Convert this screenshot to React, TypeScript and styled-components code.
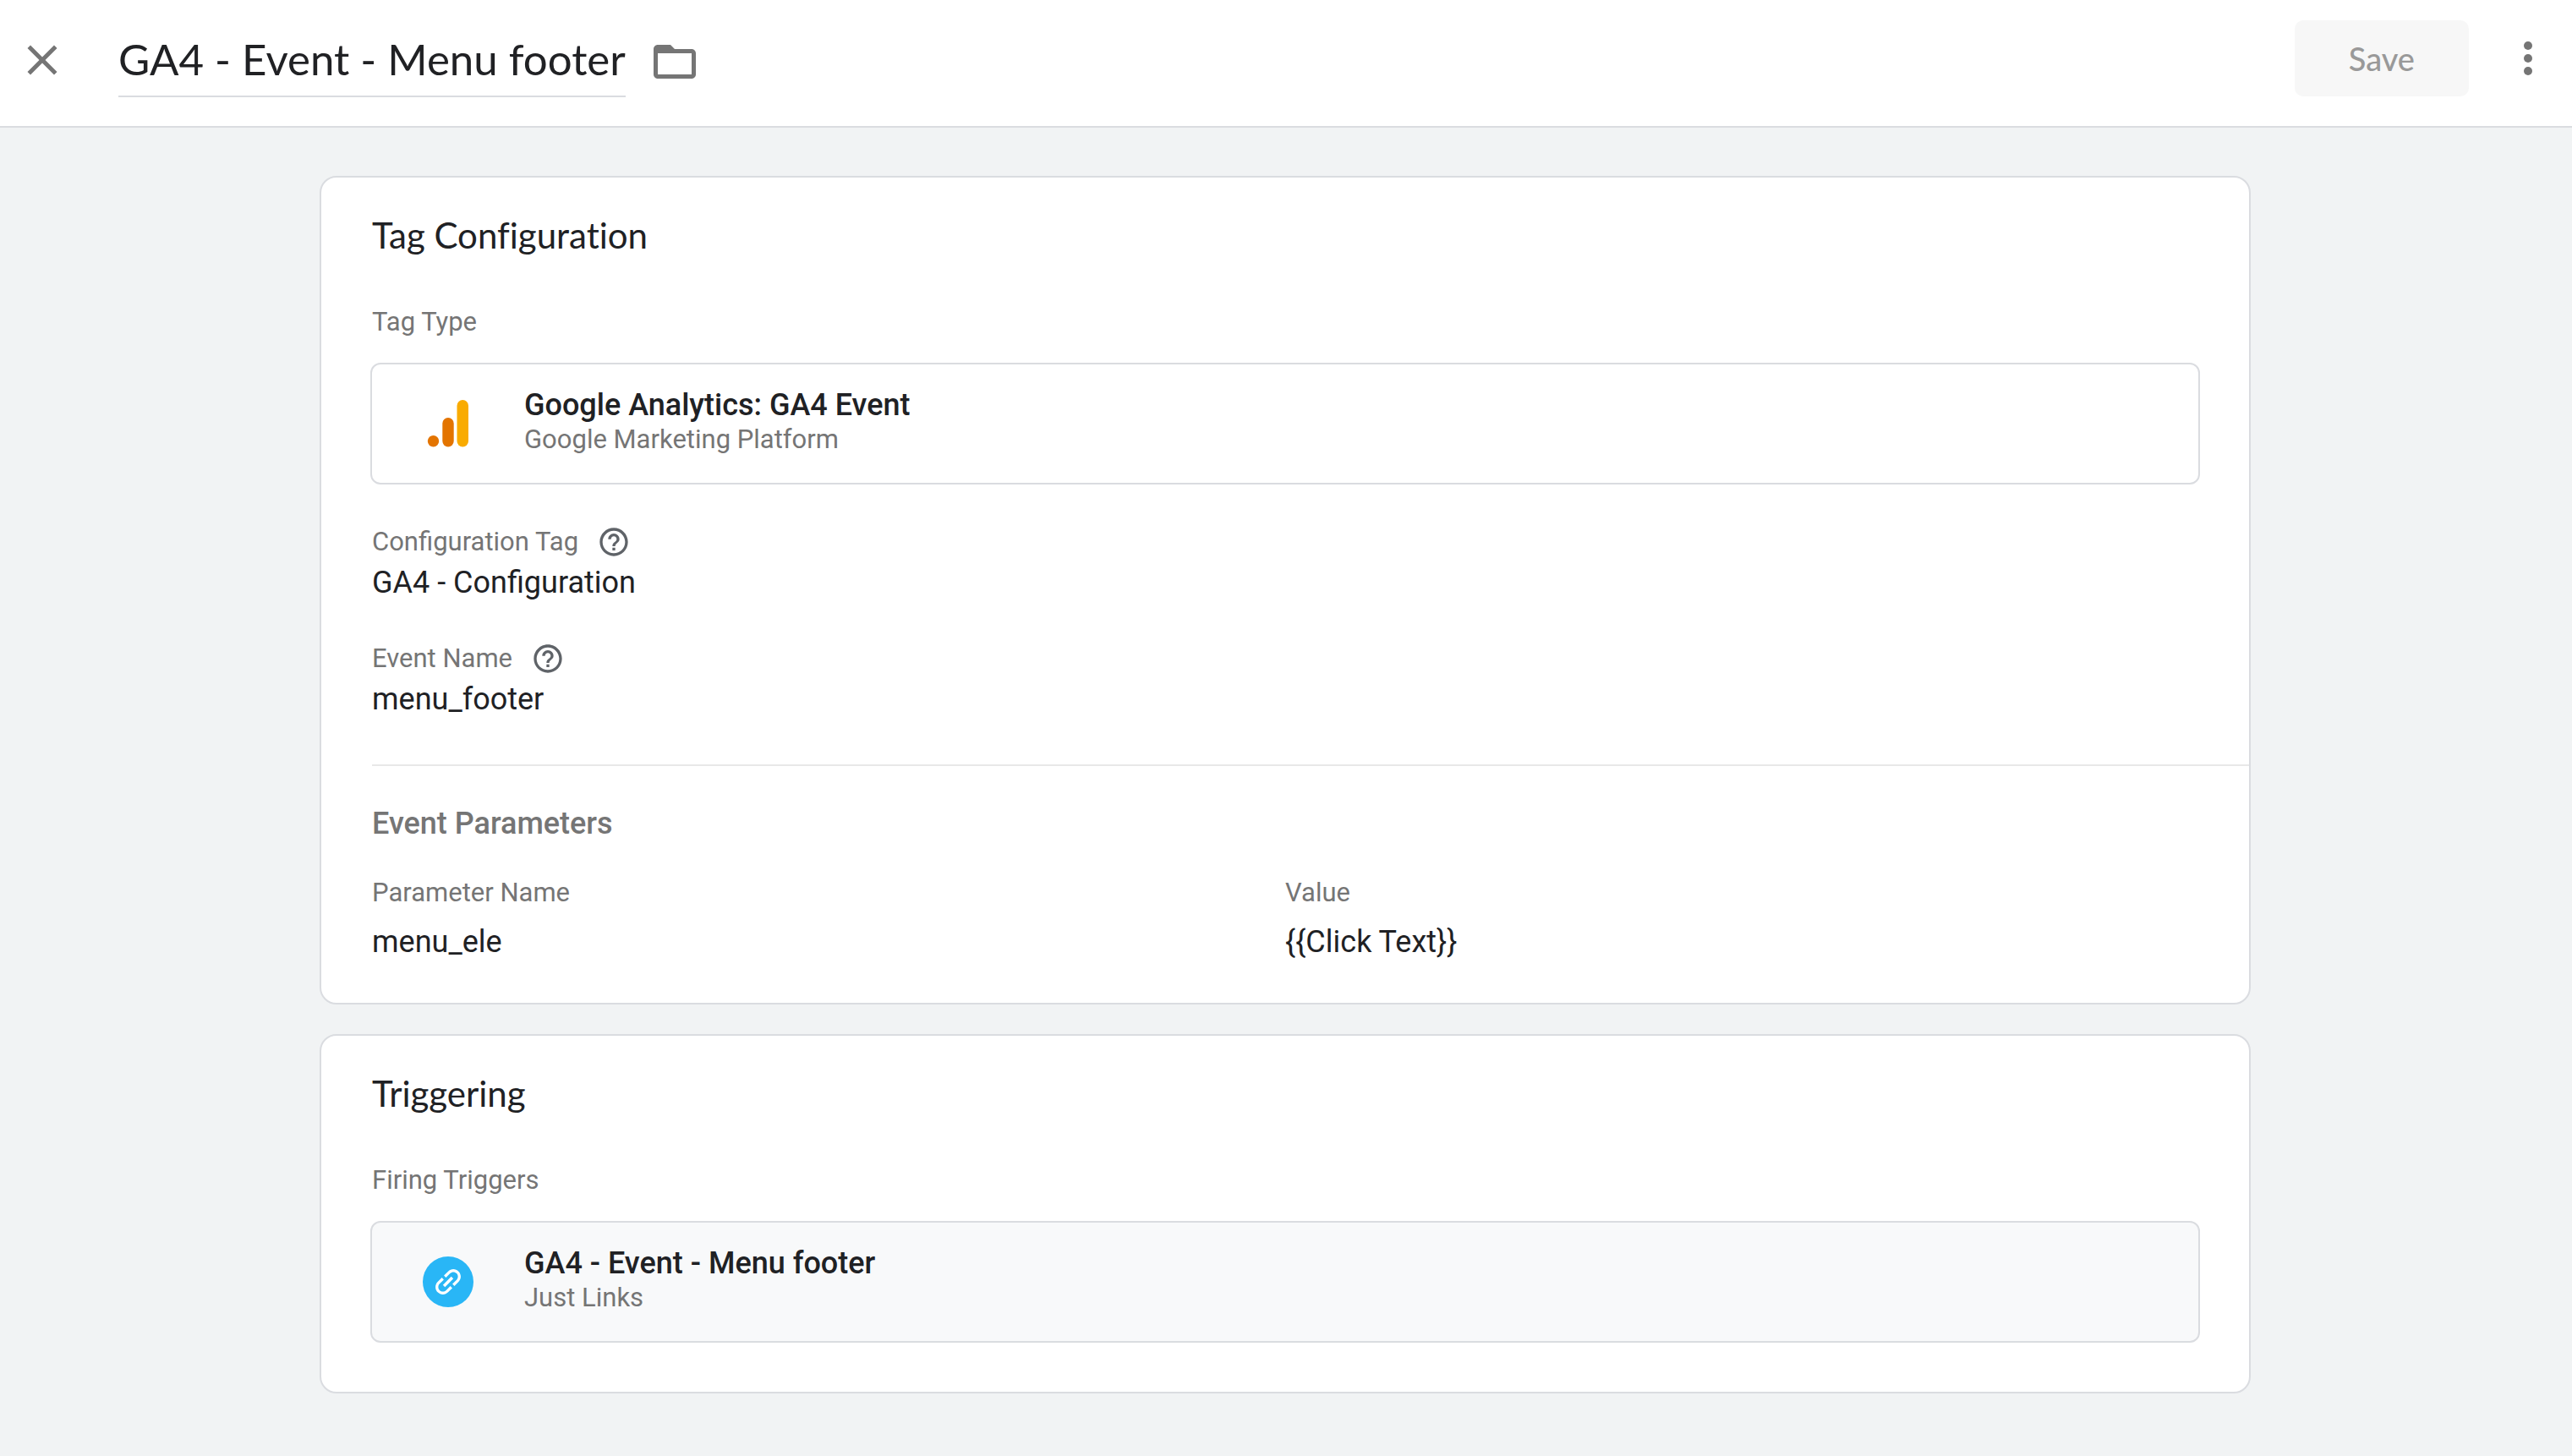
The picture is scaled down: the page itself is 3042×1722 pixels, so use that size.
import React from "react";
import styled, { createGlobalStyle } from "styled-components";

const GlobalStyle = createGlobalStyle`
  *, *::before, *::after { box-sizing: border-box; }
  html { min-height: 100%; background: #f1f3f4; }
  body { margin: 0; font-family: Roboto, "Liberation Sans", sans-serif; color: #202124; }
  button, input { font-family: inherit; color: inherit; }
  h2, h3, p, dl, dd, dt { margin: 0; font-weight: 400; }
`;

const TopBar = styled.header`
  display: flex;
  align-items: flex-start;
  justify-content: space-between;
  padding: 24px 22px 34px 20px;
  background: #fff;
  border-bottom: 2px solid #dadce0;
`;

const BarGroup = styled.div<{ $gap?: number; $top?: number }>`
  display: flex;
  align-items: center;
  gap: ${(p) => p.$gap ?? 0}px;
  padding-top: ${(p) => p.$top ?? 0}px;
`;

const IconButton = styled.button<{ $size: number; $color: string }>`
  display: flex;
  flex: none;
  width: ${(p) => p.$size}px;
  height: ${(p) => p.$size}px;
  padding: 0;
  border: 0;
  background: none;
  color: ${(p) => p.$color};
  cursor: pointer;

  svg { width: 100%; height: 100%; fill: currentColor; }
`;

const TitleInput = styled.input`
  field-sizing: content;
  height: 89px;
  margin-left: 60px;
  margin-right: 28px;
  padding: 0;
  border: 0;
  border-bottom: 2px solid #dadce0;
  background: none;
  font-family: Lato, sans-serif;
  font-size: 51px;
  outline: none;
`;

const SaveButton = styled.button`
  height: 90px;
  padding: 0 64px;
  border: 0;
  border-radius: 10px;
  background: #f7f7f7;
  color: #999;
  font-family: Lato, sans-serif;
  font-size: 38px;
  font-weight: 500;
`;

const Main = styled.main`
  display: flex;
  flex-direction: column;
  gap: 35px;
  padding: 57px 380px 74px 378px;
`;

const Card = styled.section<{ $bottom: number }>`
  padding: 38px 0 ${(p) => p.$bottom}px 60px;
  border: 2px solid #dadce0;
  border-radius: 20px;
  background: #fff;
`;

const CardTitle = styled.h2`
  font-family: Lato, sans-serif;
  font-size: 42px;
  line-height: 60px;
  font-variant-ligatures: none;
`;

const Caption = styled.p`
  margin: 53px 0 28px;
  color: #757575;
  font-size: 31px;
  line-height: 40px;
`;

const Tile = styled.button<{ $fill: string }>`
  display: flex;
  align-items: center;
  gap: 60px;
  width: calc(100% - 56px);
  min-height: 144px;
  margin: 0 58px 0 -2px;
  padding: 0 60px;
  border: 2px solid #dadce0;
  border-radius: 12px;
  background: ${(p) => p.$fill};
  text-align: left;
  cursor: pointer;

  svg { flex: none; width: 60px; height: 60px; }
`;

const TileText = styled.span`
  display: flex;
  flex-direction: column;
  padding-bottom: 4px;
`;

const TileName = styled.span`
  font-size: 36px;
  font-weight: 500;
  line-height: 42px;
`;

const TileDetail = styled.span`
  color: #757575;
  font-size: 31px;
  line-height: 40px;
`;

const Fields = styled.dl`
  display: flex;
  flex-direction: column;
  gap: 46px;
  padding: 48px 0 53px;
`;

const Field = styled.div`
  display: flex;
  flex-direction: column;
  gap: 4px;
`;

const FieldLabel = styled.dt`
  display: flex;
  align-items: center;
  gap: 22px;
  color: #757575;
  font-size: 31px;
  line-height: 40px;
`;

const FieldValue = styled.dd`
  font-size: 36px;
  line-height: 48px;
`;

const Parameters = styled.section`
  padding: 44px 60px 0 0;
  border-top: 2px solid #e8e8e8;
`;

const SubTitle = styled.h3`
  color: #757575;
  font-size: 36px;
  font-weight: 500;
  line-height: 48px;
`;

const ParameterTable = styled.table`
  width: 100%;
  margin-top: 38px;
  border-collapse: collapse;
  table-layout: fixed;

  th, td { padding: 0; text-align: left; }
  th {
    padding-bottom: 14px;
    color: #757575;
    font-size: 31px;
    font-weight: 400;
    line-height: 40px;
  }
  td { font-size: 36px; line-height: 48px; }
`;

const CloseIcon = () => (
  <svg viewBox="0 0 24 24" aria-hidden="true">
    <path d="M19 6.41 17.59 5 12 10.59 6.41 5 5 6.41 10.59 12 5 17.59 6.41 19 12 13.41 17.59 19 19 17.59 13.41 12z" />
  </svg>
);

const FolderIcon = () => (
  <svg viewBox="0 0 24 24" aria-hidden="true">
    <path d="M20 6.8h-8l-2-2H4c-1.1 0-1.99.9-1.99 2L2 18.8c0 1.1.9 2 2 2h16c1.1 0 2-.9 2-2v-10c0-1.1-.9-2-2-2zm0 12H4v-10h16v10z" />
  </svg>
);

const MoreIcon = () => (
  <svg viewBox="0 0 24 24" aria-hidden="true">
    <circle cx="12" cy="6" r="2" />
    <circle cx="12" cy="12" r="2" />
    <circle cx="12" cy="18" r="2" />
  </svg>
);

const HelpIcon = () => (
  <svg viewBox="0 0 24 24" aria-hidden="true">
    <path d="M11 18h2v-2h-2v2zm1-16C6.48 2 2 6.48 2 12s4.48 10 10 10 10-4.48 10-10S17.52 2 12 2zm0 18c-4.41 0-8-3.59-8-8s3.59-8 8-8 8 3.59 8 8-3.59 8-8 8zm0-14c-2.21 0-4 1.79-4 4h2c0-1.1.9-2 2-2s2 .9 2 2c0 2-3 1.75-3 5h2c0-2.25 3-2.5 3-5 0-2.21-1.79-4-4-4z" />
  </svg>
);

const AnalyticsIcon = () => (
  <svg viewBox="0 0 60 60" aria-hidden="true">
    <rect x="40.5" y="2" width="13.5" height="55.5" rx="6.75" fill="#f9ab00" />
    <rect x="23.3" y="23" width="13.4" height="34.5" rx="6.7" fill="#e37400" />
    <circle cx="12.5" cy="50.8" r="6.7" fill="#e37400" />
  </svg>
);

const LinkIcon = () => (
  <svg viewBox="0 0 60 60" aria-hidden="true">
    <circle cx="30" cy="30" r="30" fill="#29b6f6" />
    <g transform="translate(30 30) rotate(-45) scale(1.75) translate(-12 -12)">
      <path
        fill="#fff"
        d="M3.9 12c0-1.71 1.39-3.1 3.1-3.1h4V7H7c-2.76 0-5 2.24-5 5s2.24 5 5 5h4v-1.9H7c-1.71 0-3.1-1.39-3.1-3.1zM8 13h8v-2H8v2zm9-6h-4v1.9h4c1.71 0 3.1 1.39 3.1 3.1s-1.39 3.1-3.1 3.1h-4V17h4c2.76 0 5-2.24 5-5s-2.24-5-5-5z"
      />
    </g>
  </svg>
);

const fields = [
  { label: "Configuration Tag", value: "GA4 - Configuration" },
  { label: "Event Name", value: "menu_footer" },
];

const parameters = [{ name: "menu_ele", value: "{{Click Text}}" }];

export default function App() {
  return (
    <>
      <GlobalStyle />
      <TopBar>
        <BarGroup $top={2}>
          <IconButton type="button" aria-label="Close" $size={60} $color="#757575">
            <CloseIcon />
          </IconButton>
          <TitleInput aria-label="Tag name" defaultValue="GA4 - Event - Menu footer" />
          <IconButton type="button" aria-label="Move to folder" $size={60} $color="#757575">
            <FolderIcon />
          </IconButton>
        </BarGroup>
        <BarGroup $gap={40}>
          <SaveButton type="button" disabled>
            Save
          </SaveButton>
          <IconButton type="button" aria-label="More actions" $size={60} $color="#757575">
            <MoreIcon />
          </IconButton>
        </BarGroup>
      </TopBar>
      <Main>
        <Card $bottom={48}>
          <CardTitle>Tag Configuration</CardTitle>
          <Caption>Tag Type</Caption>
          <Tile type="button" $fill="#fff">
            <AnalyticsIcon />
            <TileText>
              <TileName>Google Analytics: GA4 Event</TileName>
              <TileDetail>Google Marketing Platform</TileDetail>
            </TileText>
          </Tile>
          <Fields>
            {fields.map((field) => (
              <Field key={field.label}>
                <FieldLabel>
                  {field.label}
                  <IconButton type="button" aria-label={`About ${field.label}`} $size={40} $color="#5f6368">
                    <HelpIcon />
                  </IconButton>
                </FieldLabel>
                <FieldValue>{field.value}</FieldValue>
              </Field>
            ))}
          </Fields>
          <Parameters>
            <SubTitle>Event Parameters</SubTitle>
            <ParameterTable>
              <thead>
                <tr>
                  <th scope="col">Parameter Name</th>
                  <th scope="col">Value</th>
                </tr>
              </thead>
              <tbody>
                {parameters.map((parameter) => (
                  <tr key={parameter.name}>
                    <td>{parameter.name}</td>
                    <td>{parameter.value}</td>
                  </tr>
                ))}
              </tbody>
            </ParameterTable>
          </Parameters>
        </Card>
        <Card $bottom={58}>
          <CardTitle>Triggering</CardTitle>
          <Caption>Firing Triggers</Caption>
          <Tile type="button" $fill="#f8f9fa">
            <LinkIcon />
            <TileText>
              <TileName>GA4 - Event - Menu footer</TileName>
              <TileDetail>Just Links</TileDetail>
            </TileText>
          </Tile>
        </Card>
      </Main>
    </>
  );
}
